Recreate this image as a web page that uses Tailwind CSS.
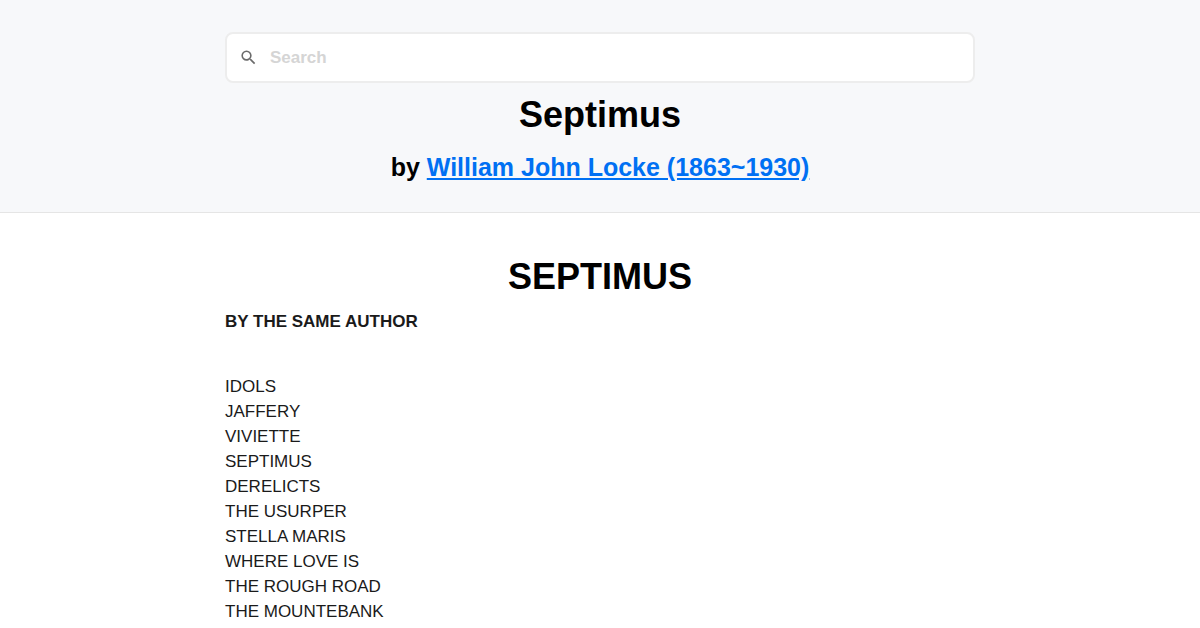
<!DOCTYPE html>
<html lang="en">
	<head>
		<meta charset="UTF-8" />
		<meta name="viewport" content="width=device-width, initial-scale=1" />
		<title>Septimus</title>
		<script src="https://cdn.jsdelivr.net/npm/@tailwindcss/browser@4"></script>
	</head>
	<body class="bg-white font-['Liberation_Sans',Arial,sans-serif] text-[17px] leading-[25px] text-[#1a1a1a]">
		<header class="border-b border-[#e5e5e5] bg-[#f7f8fa] px-4 pt-8 pb-6">
			<div class="mx-auto max-w-[750px]">
				<form role="search" class="flex items-center rounded-lg border-2 border-[#ededed] bg-white pl-3">
					<label for="search" class="shrink-0">
						<svg class="size-[19px]" viewBox="0 0 24 24" fill="#6b6b6b" role="img" aria-label="Search">
							<path d="M15.5 14h-.79l-.28-.27A6.471 6.471 0 0 0 16 9.5 6.5 6.5 0 1 0 9.5 16c1.61 0 3.09-.59 4.23-1.57l.27.28v.79l5 4.99L20.49 19l-4.99-5zm-6 0C7.01 14 5 11.99 5 9.5S7.01 5 9.5 5 14 7.01 14 9.5 11.99 14 9.5 14z" />
						</svg>
					</label>
					<input
						type="text"
						id="search"
						placeholder="Search"
						class="h-[47px] w-full px-3 font-bold placeholder:text-[#d5d5d5] focus:outline-none"
					/>
				</form>
				<h1 class="mt-2 text-center text-4xl leading-[48px] font-bold text-black">Septimus</h1>
				<h2 class="mt-2 text-center text-[25px] leading-[41px] font-bold text-black">
					by
					<a href="#" class="text-[#0070f3] underline">William John Locke (1863~1930)</a>
				</h2>
			</div>
		</header>
		<main class="px-4 pt-10">
			<div class="mx-auto max-w-[750px]">
				<h1 class="text-center text-4xl leading-[48px] font-bold text-black">SEPTIMUS</h1>
				<p class="mt-2 font-bold">BY THE SAME AUTHOR</p>
				<p class="mt-10">
					IDOLS<br />
					JAFFERY<br />
					VIVIETTE<br />
					SEPTIMUS<br />
					DERELICTS<br />
					THE USURPER<br />
					STELLA MARIS<br />
					WHERE LOVE IS<br />
					THE ROUGH ROAD<br />
					THE MOUNTEBANK
				</p>
			</div>
		</main>
	</body>
</html>
